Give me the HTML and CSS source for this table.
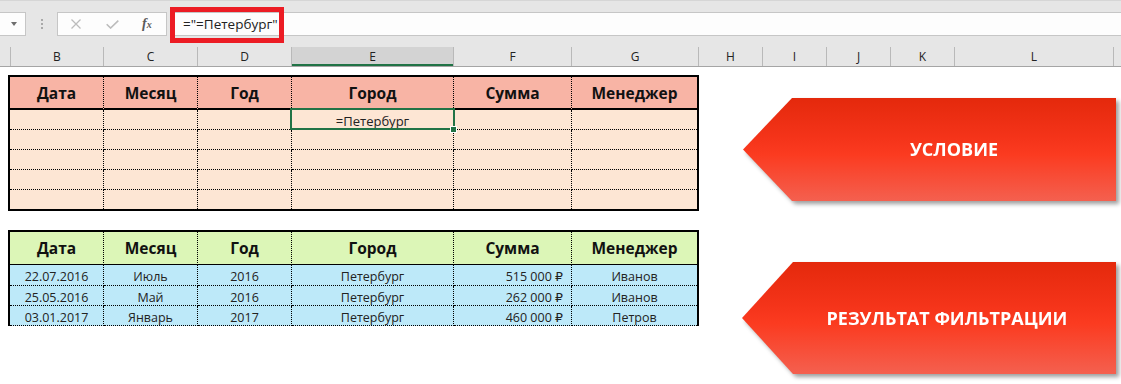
FILE: index.html
```html
<!DOCTYPE html>
<html lang="ru">
<head>
<meta charset="utf-8">
<title>Фильтр</title>
<link rel="stylesheet" href="styles.css">
</head>
<body>
<div class="toolbar">
  <div class="namebox"><span class="caret"></span></div>
  <div class="grip"><i></i><i></i><i></i></div>
  <div class="btns">
    <svg class="ic-x" width="10" height="10" viewBox="0 0 10 10"><path d="M0.5 0.5 L9.5 9.5 M9.5 0.5 L0.5 9.5" stroke="#bcbcbc" stroke-width="1.3" fill="none"/></svg>
    <svg class="ic-ok" width="13" height="9" viewBox="0 0 13 9"><path d="M0.7 4.2 L4.6 8 L12.3 0.6" stroke="#bcbcbc" stroke-width="1.6" fill="none"/></svg>
    <span class="fx"><i>f</i><span>x</span></span>
  </div>
  <div class="formula">="=Петербург"</div>
  <div class="redbox"></div>
</div>
<div class="colhdr">
  <div class="corner"></div>
  <div>B</div><div>C</div><div>D</div><div class="sel">E</div><div>F</div><div>G</div><div>H</div><div>I</div><div>J</div><div>K</div><div>L</div><div></div>
</div>
<div class="sheet">
  <div class="tbl t1">
    <div class="c h">Дата</div><div class="c h">Месяц</div><div class="c h">Год</div><div class="c h">Город</div><div class="c h">Сумма</div><div class="c h">Менеджер</div>
    <div class="c"></div><div class="c"></div><div class="c"></div><div class="c">=Петербург</div><div class="c"></div><div class="c"></div>
    <div class="c"></div><div class="c"></div><div class="c"></div><div class="c"></div><div class="c"></div><div class="c"></div>
    <div class="c"></div><div class="c"></div><div class="c"></div><div class="c"></div><div class="c"></div><div class="c"></div>
    <div class="c"></div><div class="c"></div><div class="c"></div><div class="c"></div><div class="c"></div><div class="c"></div>
    <div class="c last"></div><div class="c last"></div><div class="c last"></div><div class="c last"></div><div class="c last"></div><div class="c last"></div>
  </div>
  <div class="tbl t2">
    <div class="c h">Дата</div><div class="c h">Месяц</div><div class="c h">Год</div><div class="c h">Город</div><div class="c h">Сумма</div><div class="c h">Менеджер</div>
    <div class="c">22.07.2016</div><div class="c">Июль</div><div class="c">2016</div><div class="c">Петербург</div><div class="c r">515 000 ₽</div><div class="c">Иванов</div>
    <div class="c">25.05.2016</div><div class="c">Май</div><div class="c">2016</div><div class="c">Петербург</div><div class="c r">262 000 ₽</div><div class="c">Иванов</div>
    <div class="c">03.01.2017</div><div class="c">Январь</div><div class="c">2017</div><div class="c">Петербург</div><div class="c r">460 000 ₽</div><div class="c">Петров</div>
  </div>
  <div class="selection"></div>
  <div class="handle"></div>
</div>
<div class="shape s1"><div class="arrow"><span>УСЛОВИЕ</span></div></div>
<div class="shape s2"><div class="arrow"><span>РЕЗУЛЬТАТ ФИЛЬТРАЦИИ</span></div></div>
</body>
</html>
```
FILE: styles.css
```css
* { box-sizing: border-box; }
html, body { margin: 0; padding: 0; }
body {
  width: 1121px;
  height: 384px;
  overflow: hidden;
  position: relative;
  background: #ffffff;
  font-family: "Open Sans", "DejaVu Sans", sans-serif;
  color: #1a1a1a;
}

/* formula bar */
.toolbar {
  height: 47px;
  background: #e6e6e6;
  border-top: 1px solid #d6d6d6;
  padding-top: 11px;
  display: flex;
  align-items: flex-start;
  position: relative;
}
.namebox {
  width: 26px;
  height: 24px;
  background: #fdfdfd;
  border: 1px solid #c6c6c6;
  border-left: none;
  display: flex;
  align-items: center;
  justify-content: flex-end;
  padding-right: 8px;
}
.caret {
  width: 0;
  height: 0;
  border-left: 3px solid transparent;
  border-right: 3px solid transparent;
  border-top: 4px solid #6e6e6e;
}
.grip {
  width: 31px;
  height: 24px;
  display: flex;
  flex-direction: column;
  align-items: center;
  justify-content: center;
  gap: 2px;
}
.grip i {
  display: block;
  width: 2px;
  height: 2px;
  background: #a9a9a9;
}
.btns {
  width: 110px;
  height: 24px;
  background: #fdfdfd;
  border: 1px solid #c6c6c6;
  display: flex;
  align-items: center;
}
.ic-x { margin-left: 13px; }
.ic-ok { margin-left: 25px; }
.fx {
  margin-left: 23px;
  font-family: "Liberation Serif", "DejaVu Serif", serif;
  font-style: italic;
  font-weight: bold;
  color: #5a5a5a;
  font-size: 14px;
  line-height: 14px;
}
.fx i { font-style: italic; }
.fx span { font-size: 10px; }
.formula {
  margin-left: 3px;
  flex: 1;
  height: 24px;
  background: #fdfdfd;
  border-top: 1px solid #c6c6c6;
  border-bottom: 1px solid #c6c6c6;
  border-left: 1px solid #c6c6c6;
  padding-left: 12px;
  font-size: 13.5px;
  line-height: 22px;
  color: #222;
}
.redbox {
  position: absolute;
  left: 170px;
  top: 6px;
  width: 114px;
  height: 36px;
  border: 5px solid #ec1c24;
}

/* column headers */
.colhdr {
  display: grid;
  grid-template-columns: 10px 93px 94px 94px 162px 118px 127px 64px 64px 64px 64px 159px 1fr;
  height: 20px;
  background: #e6e6e6;
  border-bottom: 1px solid #a5a5a5;
}
.colhdr div {
  border-left: 1px solid #b9b9b9;
  font-size: 12px;
  line-height: 19px;
  text-align: center;
  color: #222;
}
.colhdr .corner { border-left: none; }
.colhdr .sel {
  background: #d3d3d3;
  box-shadow: inset 0 -2px 0 #217346;
}

/* sheet */
.sheet {
  position: relative;
  padding: 8px 0 0 8px;
}
.tbl {
  width: 691px;
  border: 2px solid #000;
  display: grid;
  grid-template-columns: 94px 94px 94px 162px 118px 125px;
}
.t1 {
  grid-template-rows: 33px 20px 20px 20px 20px 19px;
  background: #fde6d4;
}
.t2 {
  margin-top: 19px;
  border-bottom: none;
  grid-template-rows: 33px 21px 20px 20px;
  background: #bde9f9;
}
.c {
  border-right: 1px dotted #000;
  border-bottom: 1px dotted #000;
  display: flex;
  align-items: center;
  justify-content: center;
  padding-top: 3px;
  font-size: 12.5px;
  color: #222;
  white-space: nowrap;
}
.c:nth-child(6n) { border-right: none; }
.c.last { border-bottom: none; }
.c.r { justify-content: flex-end; padding-right: 8px; }
.t1 .c:nth-child(10) { font-size: 13px; }
.c.h {
  padding-top: 0;
  font-weight: bold;
  font-size: 15.5px;
  color: #111;
}
.t1 .c.h { background: #f8b4a5; border-bottom: 2px solid #000; }
.t2 .c.h { background: #dcf6b7; border-bottom: 1px solid #000; }

.selection {
  position: absolute;
  left: 290px;
  top: 41px;
  width: 165px;
  height: 22px;
  border: 2px solid #217346;
}
.handle {
  position: absolute;
  left: 450px;
  top: 59px;
  width: 7px;
  height: 7px;
  background: #217346;
  border: 1px solid #ffffff;
}

/* callout shapes */
.shape {
  position: absolute;
  filter: drop-shadow(3px 3px 2px rgba(0, 0, 0, 0.38));
}
.arrow {
  width: 100%;
  height: 100%;
  background: linear-gradient(180deg, #e4290c 0%, #f5341a 40%, #fb3b20 55%, #f4604f 100%);
  display: flex;
  align-items: center;
  justify-content: center;
  color: #ffffff;
  font-weight: bold;
  font-size: 18px;
  white-space: nowrap;
}
.s1 { left: 743px; top: 98px; width: 373px; height: 103px; }
.s1 .arrow {
  clip-path: polygon(49px 0, 100% 0, 100% 100%, 49px 100%, 0 50%);
  padding-left: 49px;
  padding-bottom: 2px;
}
.s2 { left: 742px; top: 262px; width: 374px; height: 112px; }
.s2 .arrow {
  clip-path: polygon(51px 0, 100% 0, 100% 100%, 51px 100%, 0 50%);
  padding-left: 51px;
  padding-right: 15px;
}
```
